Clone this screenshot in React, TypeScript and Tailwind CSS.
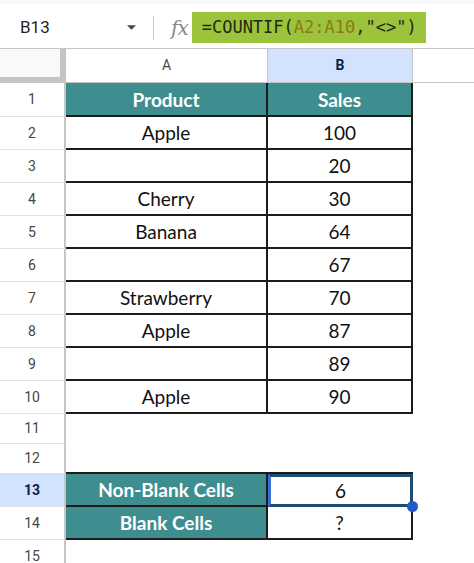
import React from 'react'

const TEAL = 'bg-[#3f8e8f]'

type Row = {
  n: number
  h: string
  a?: string
  b?: string
  kind: 'head' | 'data' | 'empty' | 'sum' | 'last'
}

const rows: Row[] = [
  { n: 1, h: 'h-[34px]', a: 'Product', b: 'Sales', kind: 'head' },
  { n: 2, h: 'h-[33px]', a: 'Apple', b: '100', kind: 'data' },
  { n: 3, h: 'h-[33px]', a: '', b: '20', kind: 'data' },
  { n: 4, h: 'h-[33px]', a: 'Cherry', b: '30', kind: 'data' },
  { n: 5, h: 'h-[33px]', a: 'Banana', b: '64', kind: 'data' },
  { n: 6, h: 'h-[33px]', a: '', b: '67', kind: 'data' },
  { n: 7, h: 'h-[33px]', a: 'Strawberry', b: '70', kind: 'data' },
  { n: 8, h: 'h-[33px]', a: 'Apple', b: '87', kind: 'data' },
  { n: 9, h: 'h-[33px]', a: '', b: '89', kind: 'data' },
  { n: 10, h: 'h-[33px]', a: 'Apple', b: '90', kind: 'data' },
  { n: 11, h: 'h-[30px]', kind: 'empty' },
  { n: 12, h: 'h-[30px]', kind: 'empty' },
  { n: 13, h: 'h-[33px]', a: 'Non-Blank Cells', b: '6', kind: 'sum' },
  { n: 14, h: 'h-[33px]', a: 'Blank Cells', b: '?', kind: 'sum' },
  { n: 15, h: 'h-[33px]', kind: 'last' },
]

const cellFont = "font-['Lato',sans-serif] text-[19px] pt-[2px]"

function SheetRow({ row }: { row: Row }) {
  const selected = row.n === 13
  return (
    <div className={`flex ${row.h}`}>
      <div
        className={`flex w-[66px] shrink-0 items-center justify-center border-r-2 border-b border-r-[#c4c7c5] border-b-[#e1e1e1] font-['Roboto',sans-serif] text-[14px] ${
          selected ? 'bg-[#d3e3fd] font-bold text-[#0b1f45]' : 'bg-white text-[#444746]'
        }`}
      >
        {row.n}
      </div>
      {row.kind === 'head' && (
        <>
          <div className={`flex w-[202px] items-center justify-center border-r-2 border-b-2 border-[#1c1c1c] ${TEAL} ${cellFont} font-bold text-white`}>
            {row.a}
          </div>
          <div className={`flex w-[145px] items-center justify-center border-r-2 border-b-2 border-[#1c1c1c] ${TEAL} ${cellFont} font-bold text-white`}>
            {row.b}
          </div>
        </>
      )}
      {row.kind === 'data' && (
        <>
          <div className={`flex w-[202px] items-center justify-center border-r-2 border-b-2 border-[#1c1c1c] bg-white ${cellFont} text-[#111]`}>
            {row.a}
          </div>
          <div className={`flex w-[145px] items-center justify-center border-r-2 border-b-2 border-[#1c1c1c] bg-white ${cellFont} text-[#111]`}>
            {row.b}
          </div>
        </>
      )}
      {row.kind === 'empty' && (
        <div className={`w-[347px] ${row.n === 12 ? 'border-b-2 border-[#1c1c1c]' : ''}`} />
      )}
      {row.kind === 'sum' && (
        <>
          <div className={`flex w-[202px] items-center justify-center border-r-2 border-b-2 border-[#1c1c1c] ${TEAL} ${cellFont} font-bold text-white`}>
            {row.a}
          </div>
          {selected ? (
            <div className="relative flex w-[145px] items-center justify-center border-[3px] border-[#1d4d72] border-l-[#3a6fd6] bg-white">
              <span className={`${cellFont} text-[#111]`}>{row.b}</span>
              <span className="absolute -right-[8px] -bottom-[8px] h-[11px] w-[11px] rounded-full bg-[#2457c9]" />
            </div>
          ) : (
            <div className={`flex w-[145px] items-center justify-center border-r-2 border-b-2 border-[#1c1c1c] bg-white ${cellFont} text-[#111]`}>
              {row.b}
            </div>
          )}
        </>
      )}
    </div>
  )
}

export default function App() {
  return (
    <div className="relative h-[563px] w-[474px] overflow-hidden bg-white">
      {/* formula bar */}
      <div className="flex h-[49px] items-center border-t-[4px] border-b border-t-[#f7f8f9] border-b-[#c4c7c5] bg-white pt-[3px]">
        <div className="w-[110px] pl-[20px] font-['Roboto',sans-serif] text-[17px] text-[#1f1f1f]">B13</div>
        <svg width="9" height="6" viewBox="0 0 10 6" className="ml-[17px]">
          <path d="M0 0 L10 0 L5 5 Z" fill="#444746" />
        </svg>
        <div className="ml-[17px] h-[24px] w-px bg-[#c4c7c5]" />
        <div className="ml-[17px] font-['DejaVu_Serif',serif] text-[20px] italic text-[#888] tracking-[-1px]">fx</div>
        <div className="ml-[4px] flex h-[31px] w-[234px] items-center bg-[#9cc33c] pl-[10px] font-['DejaVu_Sans_Mono',monospace] text-[17px] text-[#1e2a12]">
          =COUNTIF(<span className="text-[#8a7a12]">A2:A10</span>,"&lt;&gt;")
        </div>
      </div>
      {/* column headers */}
      <div className="flex h-[34px] border-b border-[#c4c7c5] font-['Roboto',sans-serif] text-[14px]">
        <div className="w-[66px] shrink-0 border-r-[6px] border-b-[5px] border-[#c4c4c4] bg-[#f8f9fa]" />
        <div className="flex w-[202px] items-center justify-center border-r border-[#c4c7c5] bg-white text-[#444746]">A</div>
        <div className="flex w-[145px] items-center justify-center border-r border-[#c4c7c5] bg-[#d3e3fd] font-bold text-[#0b1f45]">B</div>
        <div className="flex-1 bg-white" />
      </div>
      {rows.map((r) => (
        <SheetRow key={r.n} row={r} />
      ))}
    </div>
  )
}
